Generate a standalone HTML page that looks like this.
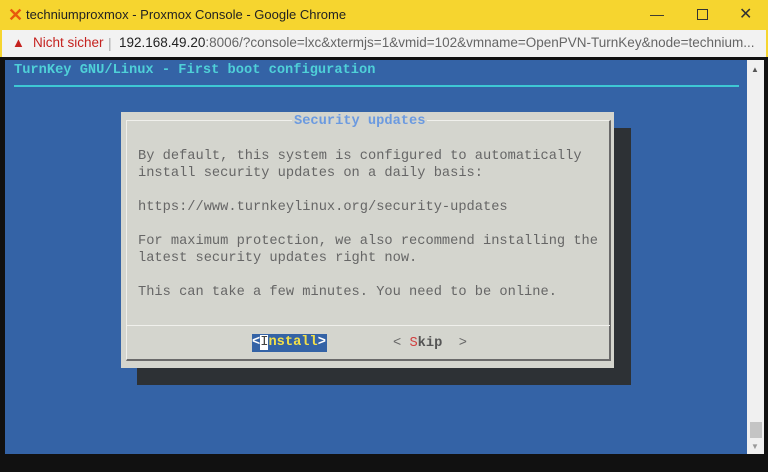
<!DOCTYPE html>
<html><head><meta charset="utf-8"><style>
*{margin:0;padding:0;box-sizing:border-box}
body{width:768px;height:472px;overflow:hidden;background:#111;position:relative;font-family:"Liberation Sans",sans-serif}
.t{position:absolute;white-space:pre;font-family:"Liberation Mono",monospace;font-size:13.7px;line-height:17px}
</style></head><body>
<div style="position:absolute;left:0;top:0;width:768px;height:30px;background:#f6d52f"></div>
<div style="position:absolute;left:8px;top:6px;font-size:18px;font-weight:bold;color:#e8590c;line-height:18px">✕</div>
<div style="position:absolute;left:26px;top:7px;font-size:13px;color:#222">techniumproxmox - Proxmox Console - Google Chrome</div>
<div style="position:absolute;left:650px;top:6px;font-size:14px;color:#333">—</div>
<div style="position:absolute;left:697px;top:9px;width:11px;height:11px;border:1px solid #333"></div>
<div style="position:absolute;left:739px;top:4px;font-size:16px;color:#333">✕</div>
<div style="position:absolute;left:0;top:30px;width:768px;height:27px;background:#f2f2f2;border-left:2px solid #f6d52f;border-right:2px solid #f6d52f"></div>
<div style="position:absolute;left:12px;top:35px;font-size:13px;color:#c5221f">▲</div>
<div style="position:absolute;left:33px;top:35px;font-size:13.5px;color:#c5221f">Nicht sicher</div>
<div style="position:absolute;left:108px;top:35px;font-size:14px;color:#aaa">|</div>
<div style="position:absolute;left:119px;top:35px;font-size:13.5px;color:#222;white-space:nowrap">192.168.49.20<span style="color:#666">:8006/?console=lxc&amp;xtermjs=1&amp;vmid=102&amp;vmname=OpenPVN-TurnKey&amp;node=technium...</span></div>
<div style="position:absolute;left:5px;top:60px;width:742px;height:394px;background:#3463a6"></div>
<div style="position:absolute;left:747px;top:60px;width:17px;height:394px;background:#f0f0f0"></div>
<div style="position:absolute;left:750px;top:422px;width:12px;height:16px;background:#c4c4c4"></div>
<div style="position:absolute;left:751px;top:65px;font-size:8px;color:#555">▲</div>
<div style="position:absolute;left:751px;top:442px;font-size:8px;color:#999">▼</div>
<div class="t" style="left:14px;top:62px;color:#4fd0d8;font-weight:bold">TurnKey GNU/Linux - First boot configuration</div>
<div style="position:absolute;left:14px;top:85px;width:725px;height:2px;background:#3ec8d4"></div>
<div style="position:absolute;left:137px;top:128px;width:494px;height:257px;background:#2d3135"></div>
<div style="position:absolute;left:121px;top:112px;width:493px;height:256px;background:#d4d5ce"></div>
<div style="position:absolute;left:126px;top:120px;width:485px;height:241px;border-top:1px solid #f0f0ec;border-left:1px solid #f0f0ec;border-right:2px solid #6a6a6a;border-bottom:2px solid #6a6a6a"></div>
<div style="position:absolute;left:127px;top:325px;width:483px;height:1px;background:#f0f0ec"></div>
<div class="t" style="left:292px;top:113px;background:#d4d5ce;color:#6b9ae0;font-weight:bold;padding:0 2px">Security updates</div>
<div class="t" style="left:138px;top:148px;color:#666">By default, this system is configured to automatically
install security updates on a daily basis:

https://www.turnkeylinux.org/security-updates

For maximum protection, we also recommend installing the
latest security updates right now.

This can take a few minutes. You need to be online.</div>
<div class="t" style="left:252px;top:334px;width:75px;height:18px;background:#3463a6;color:#fff;font-weight:bold;line-height:18px">&lt;<span style="background:#fff;color:#444;font-weight:normal">I</span><span style="color:#f3e04a">nstall</span>&gt;</div>
<div class="t" style="left:393px;top:335px;color:#666">&lt; <span style="color:#d14040">S</span><b style="color:#555">kip</b>  &gt;</div>
</body></html>
